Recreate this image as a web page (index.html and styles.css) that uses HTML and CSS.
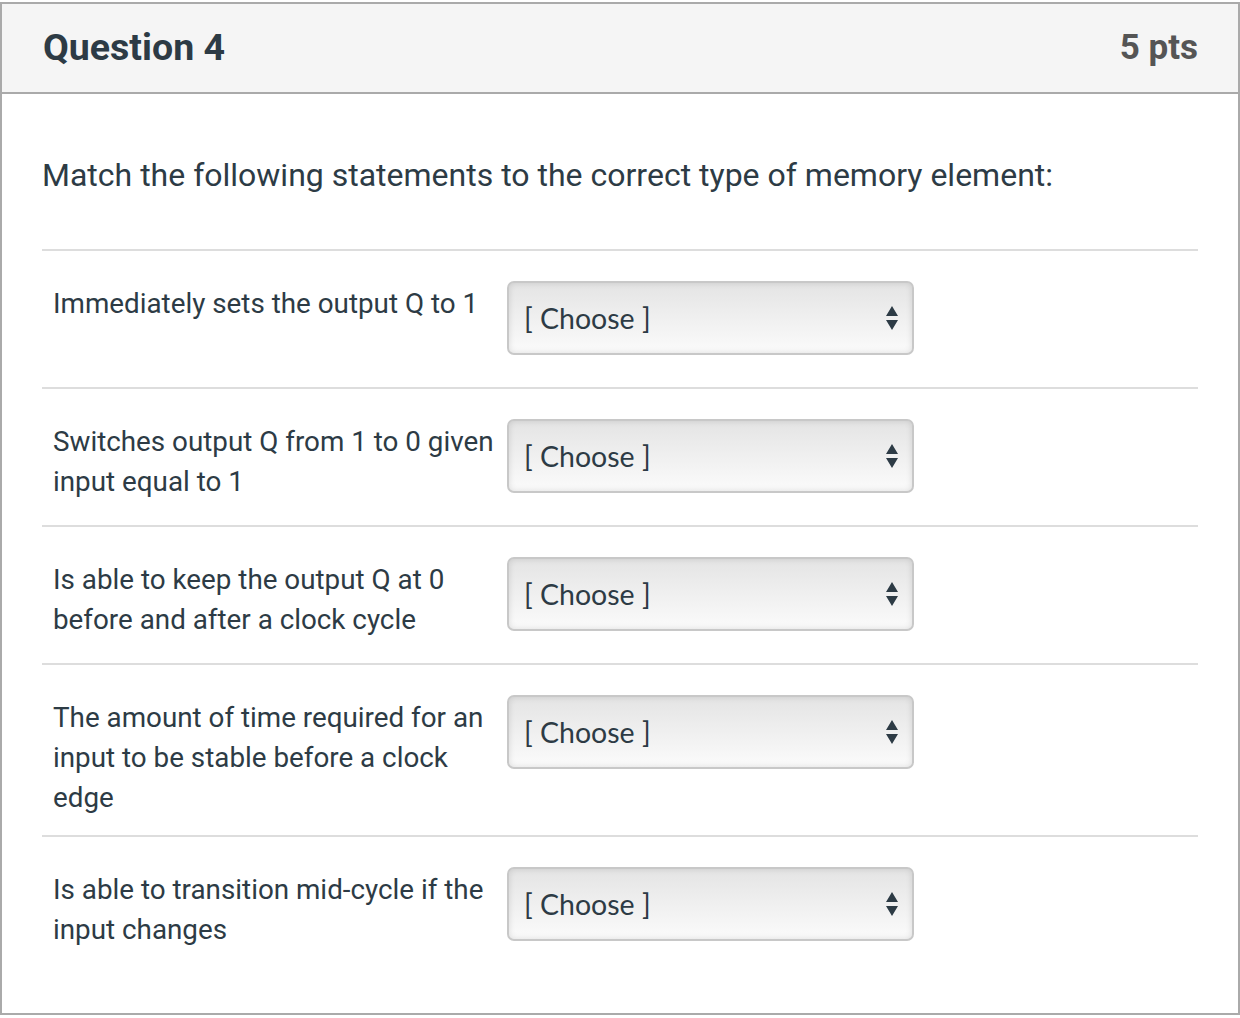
FILE: index.html
```html
<!DOCTYPE html>
<html lang="en">
<head>
  <meta charset="UTF-8">
  <title>Question 4</title>
  <link rel="stylesheet" href="styles.css">
</head>
<body>
  <div class="question">
    <div class="question-header">
      <h2>Question 4</h2>
      <span class="points">5 pts</span>
    </div>

    <div class="question-body">
      <p class="question-text">Match the following statements to the correct type of memory element:</p>

      <div class="answers">
        <div class="answer-row">
          <div class="answer-label">Immediately sets the output Q to 1</div>
          <div class="fake-select"><span>[ Choose ]</span><svg class="arrows" width="14" height="26" viewBox="0 0 14 26"><path d="M7 1 L13 11 L1 11 Z M1 15 L13 15 L7 25 Z" fill="#2d3b45"/></svg></div>
        </div>
        <div class="answer-row">
          <div class="answer-label">Switches output Q from 1 to 0 given input equal to 1</div>
          <div class="fake-select"><span>[ Choose ]</span><svg class="arrows" width="14" height="26" viewBox="0 0 14 26"><path d="M7 1 L13 11 L1 11 Z M1 15 L13 15 L7 25 Z" fill="#2d3b45"/></svg></div>
        </div>
        <div class="answer-row">
          <div class="answer-label">Is able to keep the output Q at 0 before and after a clock cycle</div>
          <div class="fake-select"><span>[ Choose ]</span><svg class="arrows" width="14" height="26" viewBox="0 0 14 26"><path d="M7 1 L13 11 L1 11 Z M1 15 L13 15 L7 25 Z" fill="#2d3b45"/></svg></div>
        </div>
        <div class="answer-row">
          <div class="answer-label">The amount of time required for an input to be stable before a clock edge</div>
          <div class="fake-select"><span>[ Choose ]</span><svg class="arrows" width="14" height="26" viewBox="0 0 14 26"><path d="M7 1 L13 11 L1 11 Z M1 15 L13 15 L7 25 Z" fill="#2d3b45"/></svg></div>
        </div>
        <div class="answer-row">
          <div class="answer-label">Is able to transition mid-cycle if the input changes</div>
          <div class="fake-select"><span>[ Choose ]</span><svg class="arrows" width="14" height="26" viewBox="0 0 14 26"><path d="M7 1 L13 11 L1 11 Z M1 15 L13 15 L7 25 Z" fill="#2d3b45"/></svg></div>
        </div>
      </div>
    </div>
  </div>
</body>
</html>
```

FILE: styles.css
```css
:root {
  --text-color: #2d3b45;
  --border-color: #aaaaaa;
  --divider: #dddddd;
  --header-bg: #f5f5f5;
}

* {
  box-sizing: border-box;
}

body {
  margin: 0;
  padding-top: 2px;
  background: #ffffff;
  font-family: Roboto, "Liberation Sans", sans-serif;
  color: var(--text-color);
}

.question {
  border: 2px solid var(--border-color);
  min-height: 1012px;
}

.question-header {
  display: flex;
  justify-content: space-between;
  align-items: center;
  height: 90px;
  padding: 0 40px 2px 41px;
  background: var(--header-bg);
  border-bottom: 2px solid var(--border-color);
}

.question-header h2 {
  margin: 0;
  font-size: 37.5px;
  font-weight: 700;
}

.points {
  font-size: 35px;
  font-weight: 700;
  color: #555555;
}

.question-body {
  padding: 61px 40px 40px 40px;
}

.question-text {
  margin: 0 0 54px 0;
  font-size: 32px;
  line-height: 40px;
}

.answer-row {
  display: flex;
  align-items: flex-start;
  gap: 7px;
  padding: 30px 0 17px 11px;
  border-top: 2px solid var(--divider);
}

.answer-label {
  width: 447px;
  padding-top: 3px;
  font-size: 27.8px;
  line-height: 40px;
}

.fake-select {
  display: flex;
  align-items: center;
  justify-content: space-between;
  width: 407px;
  height: 74px;
  margin: 0 0 15px 0;
  padding: 0 13px 0 15px;
  border: 2px solid #c8c8c8;
  border-radius: 7px;
  background: linear-gradient(#e4e4e4, #fbfbfb);
  box-shadow: inset 0 0 6px rgba(0, 0, 0, 0.12);
  font-family: Lato, "Open Sans", sans-serif;
  font-size: 28.5px;
}
```
